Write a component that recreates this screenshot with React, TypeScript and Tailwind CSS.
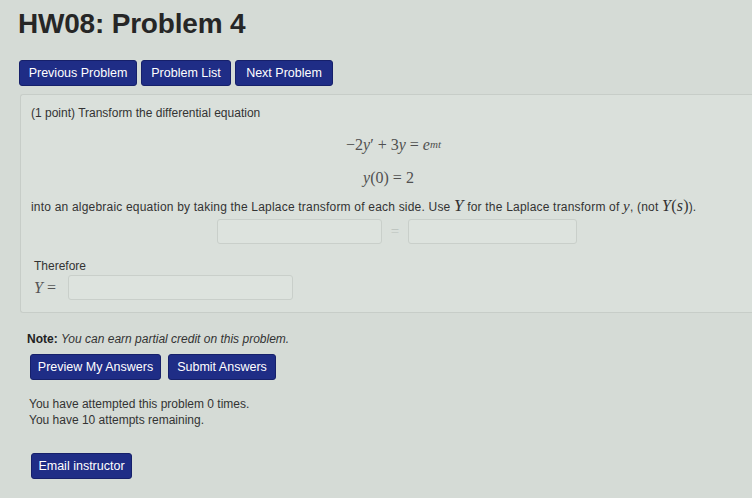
import React from 'react';

const sans = { fontFamily: '"Liberation Sans", Arial, sans-serif' };
const serif = { fontFamily: '"Liberation Serif", "Times New Roman", serif' };

const NavButton: React.FC<{ label: string; className?: string }> = ({ label, className = '' }) => (
  <button
    className={`h-[26px] rounded-[3px] bg-[#1f2d86] text-[12.5px] text-white border border-[#16206a] ${className}`}
  >
    {label}
  </button>
);

const AnswerBox: React.FC<{ className?: string }> = ({ className = '' }) => (
  <div className={`h-[25px] rounded-[3px] border border-[#c9cfca] bg-[#dde3de] ${className}`} />
);

export default function App() {
  return (
    <div className="w-[752px] h-[498px] overflow-hidden bg-[#d5dbd6] text-[#333]" style={sans}>
      <div className="pl-[18px] pt-[8px]">
        <h1 className="text-[28px] leading-[32px] font-bold text-[#262626] tracking-[-0.2px]">HW08: Problem 4</h1>
      </div>

      {/* navigation */}
      <div className="flex gap-[4px] pl-[19px] pt-[20px]">
        <NavButton label="Previous Problem" className="w-[118px]" />
        <NavButton label="Problem List" className="w-[90px]" />
        <NavButton label="Next Problem" className="w-[98px]" />
      </div>

      {/* problem box */}
      <div className="ml-[20px] mt-[8px] h-[219px] border border-r-0 border-[#c7cdc8] bg-[#dae0db] rounded-l-[3px] pl-[10px] pt-[10px] text-[12px]">
        <div className="leading-[16px]">(1 point) Transform the differential equation</div>

        <div className="flex flex-col items-center text-[16px] text-[#505050]" style={serif}>
          <div className="mt-[14px] leading-[20px] pl-[4px]">
            −2<i>y</i>′ + 3<i>y</i> = <i>e</i>
            <sup className="text-[11px] italic relative -top-[2px]">mt</sup>
          </div>
          <div className="mt-[13px] leading-[20px] pr-[6px]">
            <i>y</i>(0) = 2
          </div>
        </div>

        <div className="mt-[10px] leading-[16px] tracking-[0.2px]">
          into an algebraic equation by taking the Laplace transform of each side. Use{' '}
          <i className="text-[17px]" style={serif}>Y</i> for the Laplace transform of{' '}
          <i className="text-[15px]" style={serif}>y</i>, (not{' '}
          <span className="text-[16px]" style={serif}>
            <i>Y</i>(<i>s</i>)
          </span>
          ).
        </div>

        <div className="flex items-center mt-[4px] pl-[186px]">
          <AnswerBox className="w-[165px]" />
          <span className="w-[26px] text-center text-[15px] text-[#b9c0bb]" style={serif}>=</span>
          <AnswerBox className="w-[169px]" />
        </div>

        <div className="mt-[14px] pl-[3px] leading-[16px]">Therefore</div>
        <div className="flex items-center mt-[1px] pl-[3px]">
          <span className="w-[34px] text-[16px] text-[#555]" style={serif}>
            <i>Y</i> =
          </span>
          <AnswerBox className="w-[225px]" />
        </div>
      </div>

      <div className="pl-[27px] mt-[18px] text-[12px] leading-[16px]">
        <b className="text-[#222]">Note:</b> <i>You can earn partial credit on this problem.</i>
      </div>

      <div className="flex gap-[7px] pl-[30px] mt-[7px]">
        <NavButton label="Preview My Answers" className="w-[131px]" />
        <NavButton label="Submit Answers" className="w-[108px]" />
      </div>

      <div className="pl-[29px] mt-[16px] text-[12px] leading-[16px]">
        <div>You have attempted this problem 0 times.</div>
        <div>You have 10 attempts remaining.</div>
      </div>

      <div className="pl-[31px] mt-[25px]">
        <NavButton label="Email instructor" className="w-[101px] h-[25px]" />
      </div>
    </div>
  );
}
